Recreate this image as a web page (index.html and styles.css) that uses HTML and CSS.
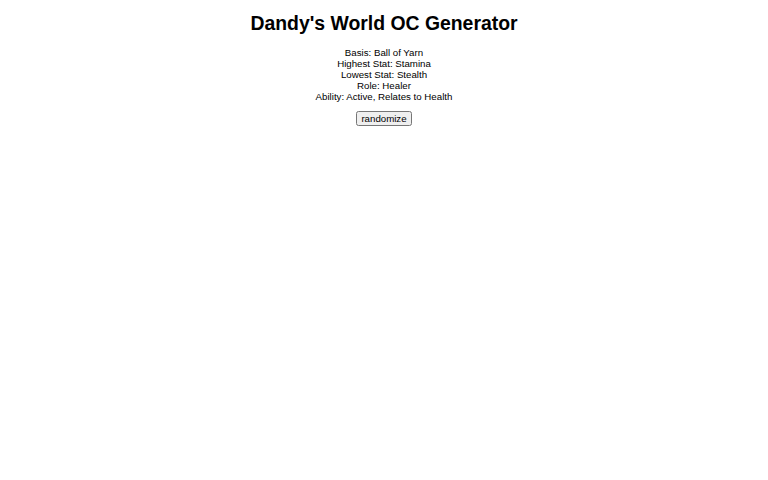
FILE: index.html
```html
<!DOCTYPE html>
<html lang="en">
<head>
  <meta charset="UTF-8">
  <title>Dandy's World OC Generator</title>
  <link rel="stylesheet" href="styles.css">
</head>
<body>
  <h1 class="title">Dandy's World OC Generator</h1>
  <div class="traits">
    <div>Basis: Ball of Yarn</div>
    <div>Highest Stat: Stamina</div>
    <div>Lowest Stat: Stealth</div>
    <div>Role: Healer</div>
    <div>Ability: Active, Relates to Health</div>
  </div>
  <button class="randomize">randomize</button>
</body>
</html>
```

FILE: styles.css
```css
body {
  margin: 0;
  padding: 11px 8px;
  font-family: "Liberation Sans", Arial, sans-serif;
  text-align: center;
  color: #000;
  background: #fff;
}

.title {
  font-size: 19.4px;
  margin: 0 0 12px;
  line-height: 24px;
}

.traits {
  font-size: 9.7px;
  line-height: 11px;
}

.randomize {
  margin-top: 9px;
  font-family: "Liberation Sans", Arial, sans-serif;
  font-size: 9.7px;
  padding: 0 3px;
  height: 15px;
}
```
